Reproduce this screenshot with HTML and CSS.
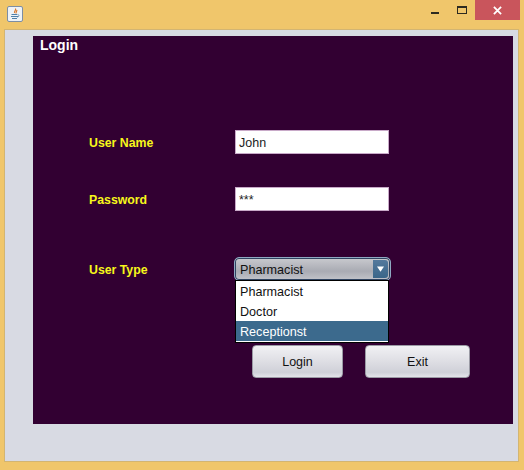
FILE: index.html
```html
<!DOCTYPE html>
<html lang="en">
<head>
<meta charset="utf-8">
<title>Login</title>
<link rel="stylesheet" href="styles.css">
</head>
<body>
<div class="window">
  <header class="titlebar">
    <div class="app-icon">
      <svg viewBox="0 0 16 16" width="16" height="16">
        <rect x="0.5" y="0.5" width="15" height="15" rx="1.5" fill="#eef2f6" stroke="#7d8ea3"/>
        <path d="M8.5 2.5C9.5 4 7 5 7.5 7M10 4C9.5 5.5 9 6 9 7.5" fill="none" stroke="#d9772b" stroke-width="1.1"/>
        <path d="M4.5 8.5H10M4 10.5H11M5 12.5H10" stroke="#4f7fa8" stroke-width="1"/>
        <path d="M10.5 8.5c2 0 2 2.5-.5 2.5" fill="none" stroke="#4f7fa8" stroke-width=".8"/>
      </svg>
    </div>
    <div class="controls">
      <span class="btn-min"></span>
      <span class="btn-max"></span>
      <span class="btn-close">
        <svg viewBox="0 0 10 10" width="9" height="9"><path d="M1 1L9 9M9 1L1 9" stroke="#fff" stroke-width="2"/></svg>
      </span>
    </div>
  </header>
  <main class="client">
    <section class="panel">
      <h1 class="heading">Login</h1>
      <div class="row row-name">
        <label class="label">User Name</label>
        <div class="field">John</div>
      </div>
      <div class="row row-pass">
        <label class="label">Password</label>
        <div class="field">***</div>
      </div>
      <div class="row row-type">
        <label class="label">User Type</label>
        <div class="combo">
          <span class="combo-value">Pharmacist</span>
          <span class="combo-arrow"><svg viewBox="0 0 8 6" width="7" height="6"><path d="M0 0H8L4 6Z" fill="#fff"/></svg></span>
          <ul class="popup">
            <li class="option">Pharmacist</li>
            <li class="option">Doctor</li>
            <li class="option selected">Receptionst</li>
          </ul>
        </div>
      </div>
      <div class="actions">
        <button class="button button-login">Login</button>
        <button class="button button-exit">Exit</button>
      </div>
    </section>
  </main>
</div>
</body>
</html>
```

FILE: styles.css
```css
* { box-sizing: border-box; }
html, body { margin: 0; padding: 0; }
body { width: 524px; height: 470px; overflow: hidden; font-family: "Liberation Sans", Arial, sans-serif; background: #f0c66b; }
.window { width: 524px; height: 470px; background: #f0c66b; padding: 0 5px 8px 4px; display: flex; flex-direction: column; }
.titlebar { height: 29px; flex: none; display: flex; justify-content: space-between; align-items: flex-start; margin: 0 -5px 0 -4px; padding: 0 0 0 7px; }
.app-icon { margin-top: 6px; width: 16px; height: 16px; }
.controls { display: flex; align-items: flex-start; padding-right: 4px; }
.btn-min { width: 8px; height: 2px; background: #2d2a20; margin-top: 12px; margin-right: 18px; }
.btn-max { width: 10px; height: 8px; margin-top: 6px; margin-right: 8px; border: 1px solid #2d2a20; border-top-width: 2px; }
.btn-close { width: 45px; height: 20px; background: #c9555c; display: flex; align-items: center; justify-content: center; }
.client { flex: 1; background: #d8dae3; border: 1px solid #d3b572; padding: 6px 5px 0 28px; }
.panel { width: 480px; height: 388px; background: #320032; padding: 2px 0 0 7px; }
.heading { margin: 0; font-size: 14px; line-height: 14px; color: #fff; font-weight: bold; }
.row { display: flex; align-items: center; padding-left: 49px; }
.row-name { margin-top: 78px; }
.row-pass { margin-top: 33px; }
.row-type { margin-top: 46px; }
.label { width: 146px; color: #f7f71a; font-size: 12.3px; font-weight: bold; padding-top: 2px; }
.field { width: 154px; height: 24px; background: #fff; border: 1px solid #c8a9c8; color: #1c1c1c; font-size: 12.5px; line-height: 24px; padding-left: 3px; }
.combo { position: relative; width: 157px; height: 24px; margin-left: -1px; border: 1px solid #8fa9c2; border-radius: 5px; background: linear-gradient(#c9cacf, #a9abb3 60%, #c2c4ca); display: flex; font-size: 12.6px; color: #111; box-shadow: inset 0 0 0 1px #2e4360; }
.combo-value { flex: 1; line-height: 24px; padding-left: 5px; }
.combo-arrow { width: 15px; margin: 2px 2px 2px 0; background: linear-gradient(#54799c, #3a6689); display: flex; align-items: center; justify-content: center; border-radius: 0 3px 3px 0; }
.popup { position: absolute; left: 0; top: 22px; width: 154px; height: 63px; margin: 0; padding: 0; list-style: none; background: #fff; border: 1px solid #000; z-index: 2; }
.option { height: 20px; line-height: 22px; padding-left: 4px; color: #111; font-size: 12.6px; }
.option.selected { background: #3c6a8d; color: #fff; }
.actions { display: flex; padding-left: 212px; margin-top: 64px; gap: 22px; }
.button { height: 33px; border: 1px solid #9a9aa4; border-radius: 4px; background: linear-gradient(#f1f1f4, #dcdce2 55%, #cfd0d8 85%, #e4e4ea); color: #111; font-family: inherit; font-size: 12.5px; padding: 0; }
.button-login { width: 91px; }
.button-exit { width: 105px; }
```
